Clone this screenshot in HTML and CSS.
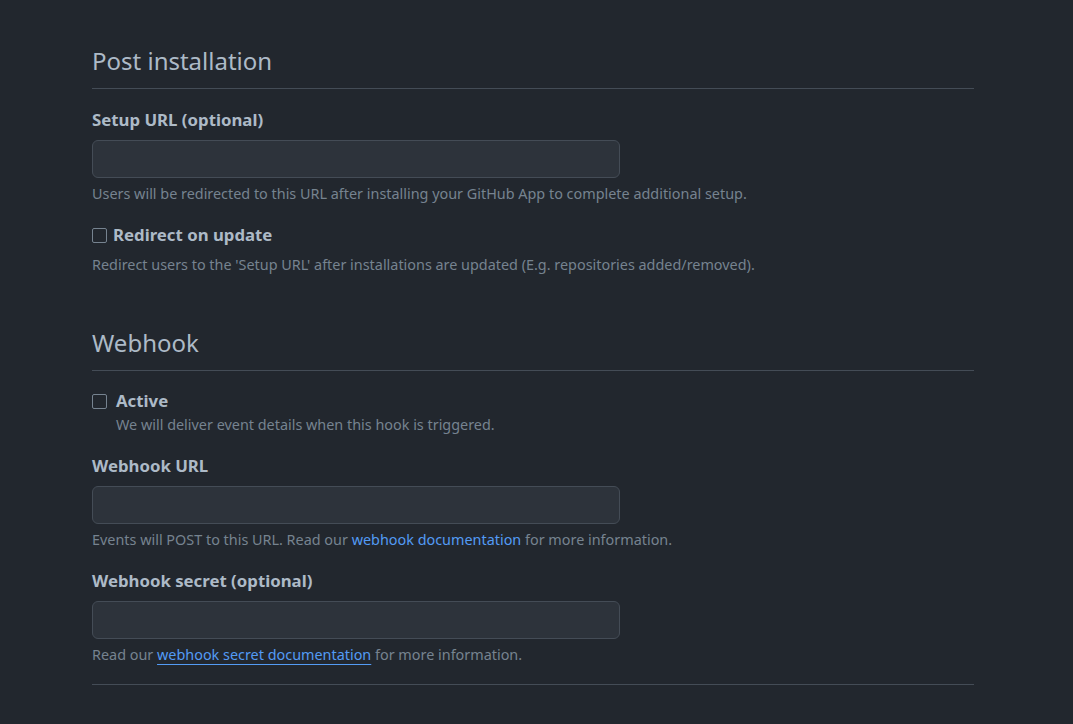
FILE: index.html
```html
<!DOCTYPE html>
<html lang="en">
<head>
	<meta charset="UTF-8">
	<title>GitHub App settings</title>
	<link rel="stylesheet" href="styles.css">
</head>
<body>
	<div class="page">
		<h2 class="subhead">Post installation</h2>

		<div class="field">
			<label class="label">Setup URL (optional)</label>
			<input type="text" class="input">
			<p class="note">Users will be redirected to this URL after installing your GitHub App to complete additional setup.</p>
		</div>

		<div class="field">
			<label class="check"><span class="box"></span>Redirect on update</label>
			<p class="note note-check">Redirect users to the 'Setup URL' after installations are updated (E.g. repositories added/removed).</p>
		</div>

		<h2 class="subhead subhead-spaced">Webhook</h2>

		<div class="field field-check">
			<label class="check check-wide"><span class="box"></span>Active</label>
			<p class="note note-indent">We will deliver event details when this hook is triggered.</p>
		</div>

		<div class="field">
			<label class="label">Webhook URL</label>
			<input type="text" class="input">
			<p class="note">Events will POST to this URL. Read our <a href="#" class="link">webhook documentation</a> for more information.</p>
		</div>

		<div class="field">
			<label class="label">Webhook secret (optional)</label>
			<input type="text" class="input">
			<p class="note">Read our <a href="#" class="link link-under">webhook secret documentation</a> for more information.</p>
		</div>

		<hr class="rule">
	</div>
</body>
</html>
```

FILE: styles.css
```css
*{ padding: 0; margin: 0; box-sizing: border-box;}
body{ background: #22272e; color: #adbac7; font-family: "Noto Sans", "Liberation Sans", sans-serif; font-size: 14px;}
.page{ width: 882px; margin-left: 92px; padding-top: 44px;}

.subhead{ font-size: 24px; font-weight: 400; line-height: 34px; color: #adbac7; padding-bottom: 10px; border-bottom: 1px solid #444c56; margin-bottom: 19px;}
.subhead-spaced{ margin-top: 50px;}

.field{ margin-bottom: 18px;}
.field-check{ margin-bottom: 18px;}
.label{ display: block; font-size: 16.8px; font-weight: 700; line-height: 24px; color: #adbac7; margin-bottom: 8px;}
.input{ display: block; width: 528px; height: 38px; background: #2d333b; border: 1px solid #444c56; border-radius: 6px; outline: none;}
.note{ font-size: 14.4px; line-height: 22px; color: #768390; margin-top: 5px;}
.note-check{ margin-top: 7px;}
.note-indent{ margin-top: 1px; padding-left: 24px;}

.check{ display: flex; align-items: center; font-size: 16.8px; font-weight: 700; line-height: 24px; color: #adbac7;}
.box{ width: 15px; height: 15px; border: 1.5px solid #768390; border-radius: 2px; margin-right: 6px;}
.check-wide{ margin-top: -1px;}
.check-wide .box{ margin-right: 9px;}

.link{ color: #539bf5; text-decoration: none;}
.link-under{ text-decoration: underline; text-underline-offset: 4px;}

.rule{ border: 0; border-top: 1px solid #444c56; margin-top: 16px;}
```
